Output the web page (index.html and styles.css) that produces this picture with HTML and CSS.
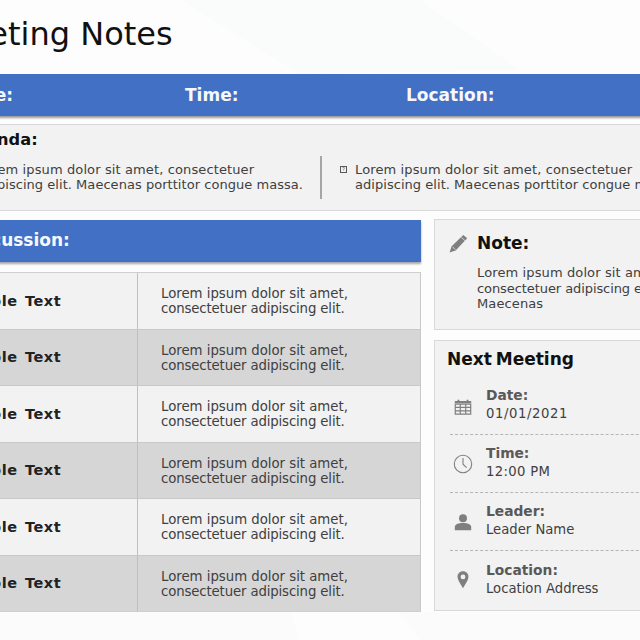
FILE: index.html
```html
<!DOCTYPE html>
<html lang="en">
<head>
<meta charset="utf-8">
<title>Meeting Notes</title>
<link rel="stylesheet" href="styles.css">
</head>
<body>
<svg class="backdrop" viewBox="0 0 640 640" aria-hidden="true">
  <path d="M180 0 L420 0 L520 70 L300 74 Z" fill="#fafbfb"/>
  <path d="M640 340 L640 430 L560 470 L600 380 Z" fill="#f9f9f9"/>
  <path d="M0 612 L640 612 L640 640 L0 640 Z" fill="#fafbfa"/>
  <path d="M290 612 L400 612 L420 640 L300 640 Z" fill="#fdfdfd"/>
</svg>
<main class="slide">
  <h1 class="title">Meeting Notes</h1>
  <section class="info-bar">
    <span>Date:</span>
    <span>Time:</span>
    <span>Location:</span>
  </section>
  <section class="agenda">
    <h2 class="agenda-title">Agenda:</h2>
    <div class="agenda-cols">
      <div class="agenda-item">
        <span class="bullet">?</span>
        <p>Lorem ipsum dolor sit amet, consectetuer<br><span class="tight">adipiscing elit. Maecenas porttitor congue massa.</span></p>
      </div>
      <div class="agenda-divider"></div>
      <div class="agenda-item">
        <span class="bullet">?</span>
        <p>Lorem ipsum dolor sit amet, consectetuer<br><span class="tight">adipiscing elit. Maecenas porttitor congue massa.</span></p>
      </div>
    </div>
  </section>
  <div class="lower">
    <section class="discussion">
      <h2 class="discussion-bar">Discussion:</h2>
      <div class="table">
        <div class="row"><div class="cell-a">Sample Text</div><div class="cell-b">Lorem ipsum dolor sit amet,<br><span class="tight">consectetuer adipiscing elit.</span></div></div>
        <div class="row alt"><div class="cell-a">Sample Text</div><div class="cell-b">Lorem ipsum dolor sit amet,<br><span class="tight">consectetuer adipiscing elit.</span></div></div>
        <div class="row"><div class="cell-a">Sample Text</div><div class="cell-b">Lorem ipsum dolor sit amet,<br><span class="tight">consectetuer adipiscing elit.</span></div></div>
        <div class="row alt"><div class="cell-a">Sample Text</div><div class="cell-b">Lorem ipsum dolor sit amet,<br><span class="tight">consectetuer adipiscing elit.</span></div></div>
        <div class="row"><div class="cell-a">Sample Text</div><div class="cell-b">Lorem ipsum dolor sit amet,<br><span class="tight">consectetuer adipiscing elit.</span></div></div>
        <div class="row alt"><div class="cell-a">Sample Text</div><div class="cell-b">Lorem ipsum dolor sit amet,<br><span class="tight">consectetuer adipiscing elit.</span></div></div>
      </div>
    </section>
    <aside class="side">
      <section class="note">
        <div class="note-head">
          <svg class="pencil" viewBox="0 0 20 20"><path d="M15 1 L19.2 4.6 L7 17.4 L0.6 19.6 L2.8 13 Z" fill="#7f7f7f"/><path d="M13 3.4 L16.8 7 M3.6 13.4 L6.6 16.4" stroke="#f2f2f2" stroke-width="0.8" fill="none"/></svg>
          <h2>Note:</h2>
        </div>
        <p class="note-text">Lorem ipsum dolor sit amet,<br><span class="tight">consectetuer adipiscing elit.</span><br>Maecenas</p>
      </section>
      <section class="next">
        <h2 class="next-title">Next Meeting</h2>
        <div class="meet">
          <svg class="ico" viewBox="0 0 22 22"><path d="M2 5.5 H5 V4 H7 V5.5 H15 V4 H17 V5.5 H20 V8 H2 Z" fill="#7f7f7f"/><path d="M2.5 9 H19.5 V20 H2.5 Z M8 9 V20 M14 9 V20 M2.5 12.6 H19.5 M2.5 16.3 H19.5" fill="none" stroke="#7f7f7f" stroke-width="1.3"/></svg>
          <div><b>Date:</b><span class="date-value">01/01/2021</span></div>
        </div>
        <div class="meet">
          <svg class="ico" viewBox="0 0 22 22"><circle cx="11" cy="11" r="9.6" fill="none" stroke="#7f7f7f" stroke-width="1.2"/><path d="M11 4.5 V11.2 L15 15" fill="none" stroke="#7f7f7f" stroke-width="1.2"/></svg>
          <div><b>Time:</b><span class="time-value">12:00 PM</span></div>
        </div>
        <div class="meet">
          <svg class="ico" viewBox="0 0 22 22"><circle cx="11" cy="6.8" r="4.4" fill="#7f7f7f"/><path d="M2 20 V16.5 C2 13.5 6 12.2 11 12.2 C16 12.2 20 13.5 20 16.5 V20 Z" fill="#7f7f7f"/></svg>
          <div><b>Leader:</b><span>Leader Name</span></div>
        </div>
        <div class="meet">
          <svg class="ico" viewBox="0 0 22 22"><path fill-rule="evenodd" d="M11 1.5 C7.4 1.5 5 4.2 5 7.4 C5 11 9 16.5 11 20 C13 16.5 17 11 17 7.4 C17 4.2 14.6 1.5 11 1.5 Z M11 5 A2.6 2.6 0 1 1 11 10.2 A2.6 2.6 0 1 1 11 5 Z" fill="#7f7f7f"/></svg>
          <div><b>Location:</b><span>Location Address</span></div>
        </div>
      </section>
    </aside>
  </div>
</main>
</body>
</html>
```
FILE: styles.css
```css
* { box-sizing: border-box; }
html, body {
  margin: 0;
  width: 640px;
  height: 640px;
  overflow: hidden;
  background: #fdfdfd;
}
body { position: relative; font-family: "DejaVu Sans", Verdana, sans-serif; color: #404040; }
h1, h2, p { margin: 0; }
.backdrop { position: absolute; left: 0; top: 0; width: 640px; height: 640px; }
.slide {
  position: relative;
  width: 760px;
  margin-left: -50px;
}
.title {
  height: 74px;
  padding-top: 13px;
  margin-left: -9px;
  font-size: 32px;
  line-height: 42px;
  font-weight: 400;
  color: #111;
  white-space: nowrap;
}
.info-bar {
  display: grid;
  grid-template-columns: 224px 221px 1fr;
  height: 42px;
  padding-left: 11px;
  align-items: center;
  background: #4170c4;
  color: #f6f8fc;
  font-weight: 700;
  font-size: 17px;
  box-shadow: 0 2px 2px #9a9a9a;
}
.agenda {
  height: 87px;
  margin-top: 8px;
  background: #f2f2f2;
  border-top: 1px solid #d9d9d9;
  border-bottom: 1px solid #d9d9d9;
  padding: 5px 0 0 12px;
}
.agenda-title { font-size: 16.2px; line-height: 19px; color: #111; }
.agenda-cols { display: flex; align-items: center; margin-top: 6px; height: 44px; }
.agenda-item { display: flex; align-items: flex-start; width: 358px; flex: none; }
.agenda-item p { font-size: 13px; line-height: 15px; white-space: nowrap; letter-spacing: .12px; }
.agenda-item + .agenda-divider + .agenda-item { padding-left: 18px; }
.agenda-divider { width: 2px; height: 43px; background: #a6a6a6; flex: none; }
.tight { letter-spacing: .04px; }
.bullet {
  flex: none;
  width: 7px;
  height: 7px;
  margin: 4px 8px 0 0;
  border: 1px solid #595959;
  font-size: 5px;
  line-height: 5px;
  text-align: center;
}
.lower { display: grid; grid-template-columns: 471px 1fr; column-gap: 13px; margin-top: 8px; }
.discussion { padding-top: 1px; }
.discussion-bar {
  height: 42px;
  padding: 0 0 2px 11px;
  display: flex;
  align-items: center;
  background: #4170c4;
  color: #f6f8fc;
  font-size: 17px;
  box-shadow: 0 2px 2px #a5a5a5;
}
.table {
  display: flex;
  flex-direction: column;
  height: 340px;
  margin-top: 10px;
  border: 1px solid #cfcfcf;
  border-right-color: #c9c9c9;
}
.row { display: grid; grid-template-columns: 187px 1fr; flex: 1; background: #f2f2f2; }
.row + .row { border-top: 1px solid #c8c8c8; }
.row.alt { background: #d6d6d6; }
.cell-a {
  display: flex;
  align-items: center;
  padding-left: 3px;
  font-size: 14.5px;
  font-weight: 700;
  letter-spacing: .5px;
  word-spacing: 2px;
  color: #222;
  white-space: nowrap;
  border-right: 1px solid #bfbfbf;
}
.cell-b { padding: 13px 0 0 23px; font-size: 13.3px; line-height: 15.2px; white-space: nowrap; letter-spacing: -.02px; }
.cell-b .tight { letter-spacing: -.14px; }
.side { display: flex; flex-direction: column; gap: 10px; }
.note {
  height: 111px;
  background: #f2f2f2;
  border: 1px solid #d9d9d9;
  padding: 11px 0 0 14px;
}
.note-head { display: flex; align-items: center; gap: 9px; height: 24px; }
.note-head h2 { font-size: 17px; color: #111; }
.pencil { width: 19px; height: 19px; flex: none; }
.note-text { margin: 10px 0 0 28px; font-size: 13px; line-height: 15.5px; white-space: nowrap; letter-spacing: .12px; }
.note-text .tight { letter-spacing: -.08px; }
.next {
  height: 271px;
  background: #f2f2f2;
  border: 1px solid #d9d9d9;
  padding: 6px 0 0 12px;
}
.next-title { font-size: 17px; word-spacing: -2px; line-height: 24px; color: #111; white-space: nowrap; height: 30px; }
.meet {
  display: flex;
  align-items: center;
  height: 58px;
  margin-left: 3px;
  padding-left: 3px;
  border-bottom: 1px dashed #b5b5b5;
}
.meet:last-child { border-bottom: 0; }
.ico { width: 20px; height: 20px; flex: none; margin-right: 13px; }
.meet div { display: flex; flex-direction: column; padding-bottom: 2px; }
.meet b { font-size: 13.8px; line-height: 18px; color: #595959; }
.meet span { font-size: 13.2px; line-height: 19px; color: #404040; white-space: nowrap; }
.meet .date-value { letter-spacing: .6px; }
.meet .time-value { letter-spacing: .35px; }
```
